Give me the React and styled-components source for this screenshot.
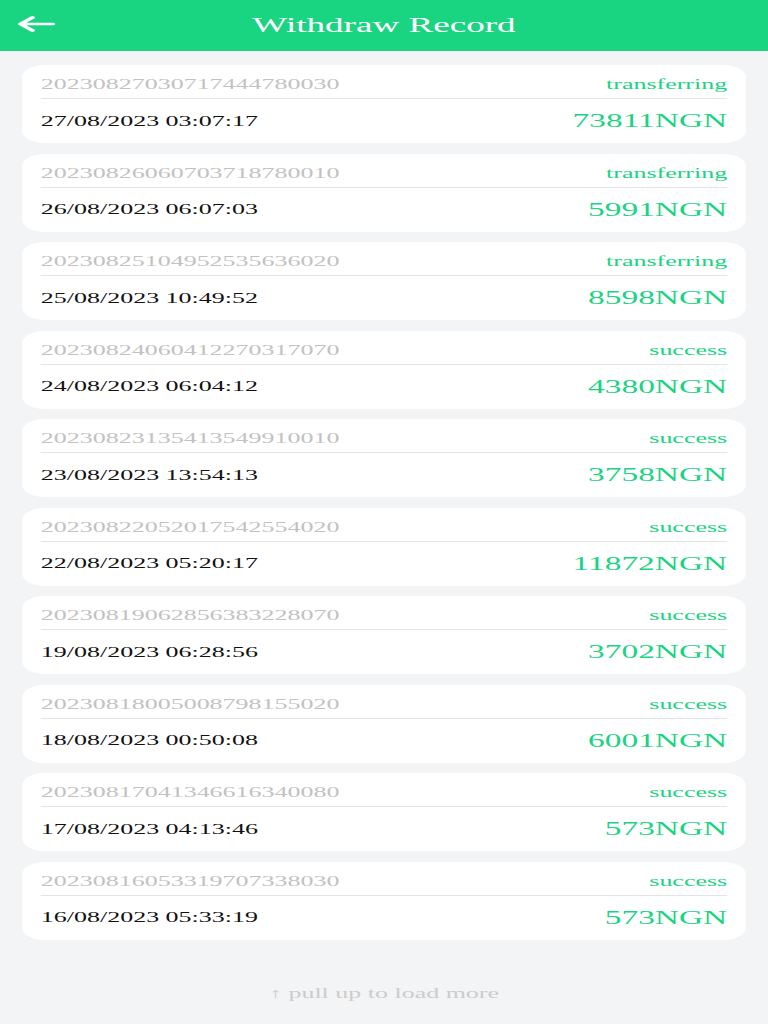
import React from "react";
import styled, { createGlobalStyle } from "styled-components";

// the reference was rendered at a 414px wide phone and stretched to 768
const DESIGN_WIDTH = 414;
const SCALE_X = 768 / DESIGN_WIDTH;

const colors = {
  green: "#19d481",
  page: "#f3f4f6",
  white: "#ffffff",
  text: "#111111",
  muted: "#c2c2c2",
  line: "#e4e4e4",
  hint: "#cccccc",
};

const records = [
  { id: "20230827030717444780030", date: "27/08/2023 03:07:17", status: "transferring", amount: 73811 },
  { id: "20230826060703718780010", date: "26/08/2023 06:07:03", status: "transferring", amount: 5991 },
  { id: "20230825104952535636020", date: "25/08/2023 10:49:52", status: "transferring", amount: 8598 },
  { id: "20230824060412270317070", date: "24/08/2023 06:04:12", status: "success", amount: 4380 },
  { id: "20230823135413549910010", date: "23/08/2023 13:54:13", status: "success", amount: 3758 },
  { id: "20230822052017542554020", date: "22/08/2023 05:20:17", status: "success", amount: 11872 },
  { id: "20230819062856383228070", date: "19/08/2023 06:28:56", status: "success", amount: 3702 },
  { id: "20230818005008798155020", date: "18/08/2023 00:50:08", status: "success", amount: 6001 },
  { id: "20230817041346616340080", date: "17/08/2023 04:13:46", status: "success", amount: 573 },
  { id: "20230816053319707338030", date: "16/08/2023 05:33:19", status: "success", amount: 573 },
];

const GlobalStyle = createGlobalStyle`
  html, body {
    margin: 0;
    padding: 0;
    overflow: hidden;
    background: ${colors.page};
  }
  body {
    font-family: "Liberation Serif", "Times New Roman", serif;
  }
`;

const BackArrow = () => (
  <svg width="21" height="16" viewBox="0 0 21 16" fill="none">
    <path
      d="M19.5 8H2M8.5 1.5L2 8l6.5 6.5"
      stroke="#ffffff"
      strokeWidth="2.6"
      strokeLinecap="round"
      strokeLinejoin="round"
    />
  </svg>
);

const App = () => {
  return (
    <>
      <GlobalStyle />
      <Stage>
        <Header>
          <BackButton>
            <BackArrow />
          </BackButton>
          <Title>Withdraw Record</Title>
          <span />
        </Header>
        <List>
          {records.map((r) => (
            <Card key={r.id}>
              <TopRow>
                <OrderNo>{r.id}</OrderNo>
                <Status>{r.status}</Status>
              </TopRow>
              <BottomRow>
                <DateText>{r.date}</DateText>
                <Amount>{r.amount}NGN</Amount>
              </BottomRow>
            </Card>
          ))}
        </List>
        <Footer>↑ pull up to load more</Footer>
      </Stage>
    </>
  );
};

export default App;

const Stage = styled.div`
  width: ${DESIGN_WIDTH}px;
  min-height: 1024px;
  background: ${colors.page};
  transform: scaleX(${SCALE_X});
  transform-origin: top left;
`;

const Header = styled.header`
  display: grid;
  grid-template-columns: 1fr auto 1fr;
  align-items: center;
  height: 51px;
  padding-bottom: 1px;
  box-sizing: border-box;
  background: ${colors.green};
`;

const BackButton = styled.div`
  display: flex;
  align-items: center;
  padding-left: 9px;
  padding-bottom: 3px;
  cursor: pointer;
`;

const Title = styled.h1`
  margin: 0;
  font-size: 20px;
  font-weight: normal;
  color: ${colors.white};
  line-height: 24px;
`;

const List = styled.div`
  display: flex;
  flex-direction: column;
  gap: 10.5px;
  padding: 14px 12px 0;
`;

const Card = styled.div`
  background: ${colors.white};
  border-radius: 12px;
  padding: 0 10px 0 10px;
  height: 78px;
  box-sizing: border-box;
  display: flex;
  flex-direction: column;
`;

const TopRow = styled.div`
  display: flex;
  justify-content: space-between;
  align-items: center;
  padding: 10px 0 3px;
  line-height: 20px;
  border-bottom: 1px solid ${colors.line};
`;

const BottomRow = styled.div`
  flex: 1;
  display: flex;
  justify-content: space-between;
  align-items: center;
  padding-top: 1px;
`;

const OrderNo = styled.span`
  font-size: 14px;
  color: ${colors.muted};
`;

const Status = styled.span`
  font-size: 14px;
  color: ${colors.green};
`;

const DateText = styled.span`
  font-size: 14px;
  color: ${colors.text};
`;

const Amount = styled.span`
  font-size: 18px;
  color: ${colors.green};
`;

const Footer = styled.div`
  text-align: center;
  font-size: 14px;
  line-height: 20px;
  color: ${colors.hint};
  padding-top: 44px;
`;
